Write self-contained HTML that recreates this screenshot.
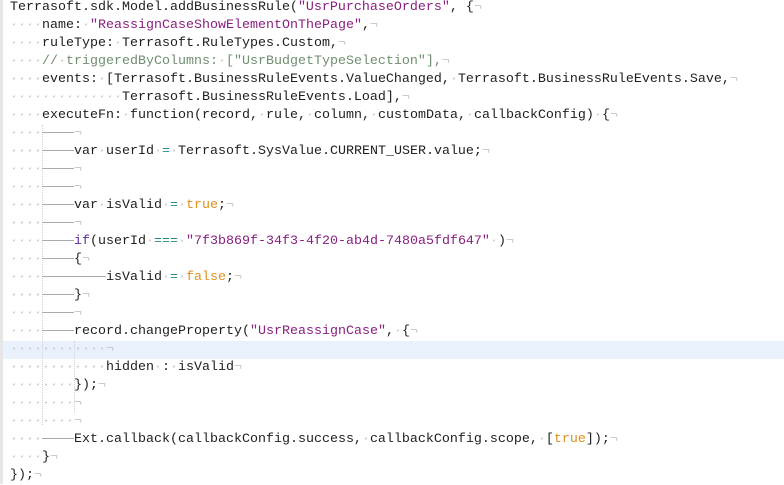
<!DOCTYPE html>
<html><head><meta charset="utf-8"><style>
html,body{margin:0;padding:0;background:#fff;width:784px;height:484px;overflow:hidden}
#ed{position:absolute;left:0;top:0;width:784px;height:484px;border-left:3px solid #e6e6e6;box-sizing:border-box}
.l{position:absolute;left:7px;height:18px;line-height:18px;white-space:pre;font-family:"Liberation Mono",monospace;font-size:13.33px;color:#1e1e1e}
.d{color:#c4c4c4}
.p{color:#c4c4c4}
.t{display:inline-block;width:32px;height:0;border-top:1px solid #aaa;vertical-align:middle}
.s{color:#8a1e82}
.c{color:#6f8f6f}
.k{color:#5a2ea0}
.o{color:#e0901c}
.e{color:#2a8a8a}
.hl{position:absolute;left:0;right:0;top:341px;height:18px;background:#e8f1fc}
.g{position:absolute;width:0;border-left:1px dotted #d0d0d0}
</style></head><body><div id="ed">
<div class="hl"></div>
<div class="g" style="left:39px;top:125px;height:300px"></div>
<div class="g" style="left:71px;top:341px;height:72px"></div>
<div class="l" style="top:-1px">Terrasoft.sdk.Model.addBusinessRule(<span class="s">"UsrPurchaseOrders"</span>, {<span class="p">¬</span></div>
<div class="l" style="top:17px"><span class="d">····</span>name:<span class="d">·</span><span class="s">"ReassignCaseShowElementOnThePage"</span>,<span class="p">¬</span></div>
<div class="l" style="top:35px"><span class="d">····</span>ruleType:<span class="d">·</span>Terrasoft.RuleTypes.Custom,<span class="p">¬</span></div>
<div class="l" style="top:53px"><span class="d">····</span><span class="c">//<span class="d">·</span>triggeredByColumns:<span class="d">·</span>["UsrBudgetTypeSelection"],</span><span class="p">¬</span></div>
<div class="l" style="top:71px"><span class="d">····</span>events:<span class="d">·</span>[Terrasoft.BusinessRuleEvents.ValueChanged,<span class="d">·</span>Terrasoft.BusinessRuleEvents.Save,<span class="p">¬</span></div>
<div class="l" style="top:89px"><span class="d">··············</span>Terrasoft.BusinessRuleEvents.Load],<span class="p">¬</span></div>
<div class="l" style="top:107px"><span class="d">····</span>executeFn:<span class="d">·</span>function(record,<span class="d">·</span>rule,<span class="d">·</span>column,<span class="d">·</span>customData,<span class="d">·</span>callbackConfig)<span class="d">·</span>{<span class="p">¬</span></div>
<div class="l" style="top:125px"><span class="d">····</span><span class="t"></span><span class="p">¬</span></div>
<div class="l" style="top:143px"><span class="d">····</span><span class="t"></span>var<span class="d">·</span>userId<span class="d">·</span><span class="e">=</span><span class="d">·</span>Terrasoft.SysValue.CURRENT_USER.value;<span class="p">¬</span></div>
<div class="l" style="top:161px"><span class="d">····</span><span class="t"></span><span class="p">¬</span></div>
<div class="l" style="top:179px"><span class="d">····</span><span class="t"></span><span class="p">¬</span></div>
<div class="l" style="top:197px"><span class="d">····</span><span class="t"></span>var<span class="d">·</span>isValid<span class="d">·</span><span class="e">=</span><span class="d">·</span><span class="o">true</span>;<span class="p">¬</span></div>
<div class="l" style="top:215px"><span class="d">····</span><span class="t"></span><span class="p">¬</span></div>
<div class="l" style="top:233px"><span class="d">····</span><span class="t"></span><span class="k">if</span>(userId<span class="d">·</span><span class="e">===</span><span class="d">·</span><span class="s">"7f3b869f-34f3-4f20-ab4d-7480a5fdf647"</span><span class="d">·</span>)<span class="p">¬</span></div>
<div class="l" style="top:251px"><span class="d">····</span><span class="t"></span>{<span class="p">¬</span></div>
<div class="l" style="top:269px"><span class="d">····</span><span class="t"></span><span class="t"></span>isValid<span class="d">·</span><span class="e">=</span><span class="d">·</span><span class="o">false</span>;<span class="p">¬</span></div>
<div class="l" style="top:287px"><span class="d">····</span><span class="t"></span>}<span class="p">¬</span></div>
<div class="l" style="top:305px"><span class="d">····</span><span class="t"></span><span class="p">¬</span></div>
<div class="l" style="top:323px"><span class="d">····</span><span class="t"></span>record.changeProperty(<span class="s">"UsrReassignCase"</span>,<span class="d">·</span>{<span class="p">¬</span></div>
<div class="l" style="top:341px"><span class="d">············</span><span class="p">¬</span></div>
<div class="l" style="top:359px"><span class="d">············</span>hidden<span class="d">·</span>:<span class="d">·</span>isValid<span class="p">¬</span></div>
<div class="l" style="top:377px"><span class="d">········</span>});<span class="p">¬</span></div>
<div class="l" style="top:395px"><span class="d">········</span><span class="p">¬</span></div>
<div class="l" style="top:413px"><span class="d">········</span><span class="p">¬</span></div>
<div class="l" style="top:431px"><span class="d">····</span><span class="t"></span>Ext.callback(callbackConfig.success,<span class="d">·</span>callbackConfig.scope,<span class="d">·</span>[<span class="o">true</span>]);<span class="p">¬</span></div>
<div class="l" style="top:449px"><span class="d">····</span>}<span class="p">¬</span></div>
<div class="l" style="top:467px">});<span class="p">¬</span></div>
</div></body></html>
